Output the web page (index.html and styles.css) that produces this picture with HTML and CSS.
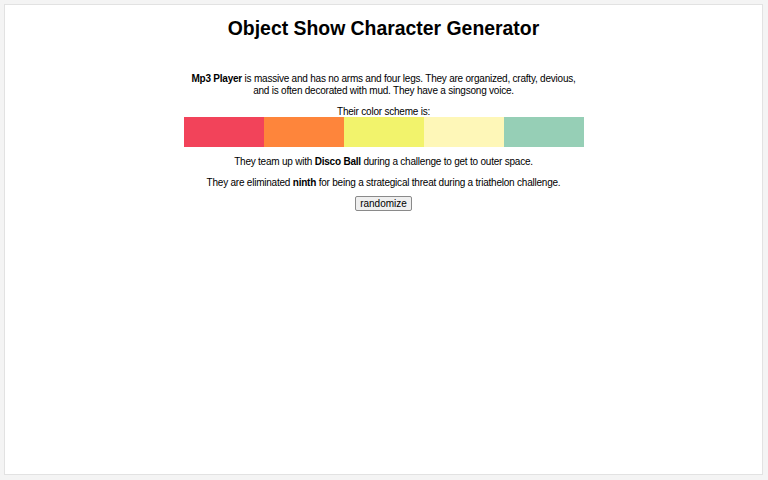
FILE: index.html
```html
<!doctype html>
<html lang="en">
  <head>
    <meta charset="UTF-8" />
    <meta name="viewport" content="width=device-width, initial-scale=1.0" />
    <title>Object Show Character Generator</title>
    <link rel="stylesheet" href="styles.css">
  </head>
  <body>
    <div class="page">
      <h1>Object Show Character Generator</h1>

      <div class="generator">
        <p class="intro">
          <b>Mp3 Player</b> is massive and has no arms and four legs. They are organized, crafty, devious,
          and is often decorated with mud. They have a singsong voice.
        </p>

        <p class="scheme-label">Their color scheme is:</p>
        <div class="palette">
          <div class="swatch" style="background: #f2435a"></div>
          <div class="swatch" style="background: #fe853b"></div>
          <div class="swatch" style="background: #f2f36c"></div>
          <div class="swatch" style="background: #fef7b8"></div>
          <div class="swatch" style="background: #96cfb6"></div>
        </div>

        <p>They team up with <b>Disco Ball</b> during a challenge to get to outer space.</p>
        <p class="elimination">They are eliminated <b>ninth</b> for being a strategical threat during a triathelon challenge.</p>

        <button>randomize</button>
      </div>
    </div>
  </body>
</html>
```

FILE: styles.css
```css
body {
  font-family: 'Liberation Sans', Arial, sans-serif;
  margin: 0;
  padding: 4px 5px 5px 4px;
  background: #f4f4f4;
}

.page {
  height: 471px;
  box-sizing: border-box;
  background: white;
  border: 1px solid #e2e2e2;
  padding-top: 12px;
}

h1 {
  margin: 0;
  font-size: 19.4px;
  line-height: 22px;
  text-align: center;
}

.generator {
  width: 400px;
  margin: 34px auto 0;
  text-align: center;
  font-size: 10px;
  line-height: 12px;
  letter-spacing: -0.22px;
}

p {
  margin: 9px 0;
}

.intro {
  margin-top: 0;
  margin-bottom: 5px;
}

.scheme-label {
  margin-bottom: 0;
  line-height: 11px;
}

.palette {
  display: flex;
  height: 30px;
  margin-bottom: 8px;
}

.swatch {
  flex: 1;
}

.elimination {
  margin-bottom: 7px;
}

button {
  font-family: inherit;
  font-size: 10px;
  line-height: 11px;
  padding: 1px 4px;
  background: #efefef;
  border: 1px solid #8a8a8a;
  border-radius: 2px;
}
```
